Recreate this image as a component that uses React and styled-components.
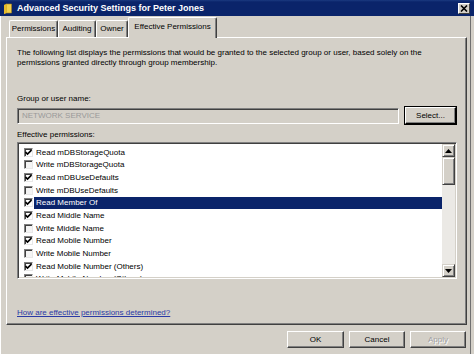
import React from "react";
import styled, { createGlobalStyle, css } from "styled-components";

const GlobalStyle = createGlobalStyle`
  html, body { margin: 0; padding: 0; background: #d4d0c8; }
  body { font-family: "Liberation Sans", Arial, sans-serif; }
  * { box-sizing: border-box; }
`;

const FONT = `"Liberation Sans", Arial, sans-serif`;

const Window = styled.div`
  width: 474px;
  height: 354px;
  background: #d4d0c8;
  display: flex;
  flex-direction: column;
  overflow: hidden;
  font-family: ${FONT};
  font-size: 8px;
  color: #000;
  box-shadow: inset -3px 0 0 #d4d0c8, inset -4px 0 0 #707070, inset 1px 0 0 #ffffff;
`;

const TitleBar = styled.div`
  height: 16px;
  flex: 0 0 16px;
  background: linear-gradient(to bottom, #1b3a80 0px, #0a246a 2px, #0a246a 100%);
  display: flex;
  align-items: center;
  padding: 0 4px 0 3px;
  gap: 5px;
`;

const TitleText = styled.div`
  color: #fff;
  font-weight: bold;
  font-size: 9px;
  flex: 1;
  white-space: nowrap;
`;

const CloseButton = styled.div`
  width: 12px;
  height: 11px;
  background: #d4d0c8;
  border-top: 1px solid #fff;
  border-left: 1px solid #fff;
  border-right: 1px solid #404040;
  border-bottom: 1px solid #404040;
  display: flex;
  align-items: center;
  justify-content: center;
`;

const Client = styled.div`
  flex: 1;
  display: flex;
  flex-direction: column;
  padding: 1px 7px 0 6px;
`;

const TabStrip = styled.div`
  display: flex;
  align-items: flex-end;
  height: 20px;
  padding-left: 3px;
`;

const Tab = styled.div`
  width: ${(p) => p.$w}px;
  height: ${(p) => (p.$active ? 21 : 17)}px;
  border-top: 1px solid #ffffff;
  border-left: 1px solid #ffffff;
  border-right: 1px solid #404040;
  box-shadow: inset -1px 0 0 #808080;
  border-top-left-radius: 2px;
  border-top-right-radius: 2px;
  background: #d4d0c8;
  display: flex;
  align-items: center;
  justify-content: center;
  white-space: nowrap;
  font-size: 8px;
  padding-bottom: ${(p) => (p.$active ? 3 : 1)}px;
  ${(p) =>
    p.$active &&
    css`
      position: relative;
      z-index: 1;
      margin-bottom: -1px;
    `}
`;

const Panel = styled.div`
  height: 288px;
  border-top: 1px solid #ffffff;
  border-left: 1px solid #ffffff;
  border-right: 1px solid #404040;
  border-bottom: 1px solid #404040;
  box-shadow: inset -1px -1px 0 #808080;
  display: flex;
  flex-direction: column;
  padding: 10px 9px 0 10px;
`;

const Description = styled.div`
  line-height: 10px;
  font-size: 8px;
  width: 420px;
`;

const Label = styled.div`
  line-height: 10px;
  margin-top: ${(p) => p.$mt || 0}px;
`;

const FieldRow = styled.div`
  display: flex;
  align-items: center;
  margin-top: 3px;
  gap: 6px;
`;

const TextBox = styled.div`
  width: 382px;
  height: 16px;
  border-top: 1px solid #808080;
  border-left: 1px solid #808080;
  border-right: 1px solid #ffffff;
  border-bottom: 1px solid #ffffff;
  box-shadow: inset 1px 1px 0 #404040, inset -1px -1px 0 #d4d0c8;
  background: #d4d0c8;
  color: #9a9a9a;
  display: flex;
  align-items: center;
  padding-left: 4px;
  font-size: 8px;
`;

const Button = styled.div`
  width: ${(p) => p.$w}px;
  height: 17px;
  background: #d4d0c8;
  border-top: 1px solid #ffffff;
  border-left: 1px solid #ffffff;
  border-right: 1px solid #404040;
  border-bottom: 1px solid #404040;
  box-shadow: inset -1px -1px 0 #808080;
  display: flex;
  align-items: center;
  justify-content: center;
  font-size: 8px;
  color: ${(p) => (p.$disabled ? "#a0a0a0" : "#000")};
  text-shadow: ${(p) => (p.$disabled ? "1px 1px 0 #fff" : "none")};
  ${(p) =>
    p.$default &&
    css`
      outline: 1px solid #000;
      outline-offset: 0px;
      border-right-color: #000;
      border-bottom-color: #000;
    `}
`;

const ListBox = styled.div`
  margin-top: 2px;
  width: 440px;
  height: 137px;
  border-top: 1px solid #808080;
  border-left: 1px solid #808080;
  border-right: 1px solid #ffffff;
  border-bottom: 1px solid #ffffff;
  box-shadow: inset 1px 1px 0 #404040, inset -1px -1px 0 #d4d0c8;
  padding: 1px;
  display: flex;
  background: #fff;
`;

const Rows = styled.div`
  flex: 1;
  overflow: hidden;
  padding-top: 2px;
  background: #fff;
`;

const Row = styled.div`
  height: 12.67px;
  display: flex;
  align-items: center;
  padding-left: 5px;
`;

const CheckBox = styled.div`
  width: 9px;
  height: 9px;
  flex: 0 0 9px;
  border-top: 1px solid #808080;
  border-left: 1px solid #808080;
  border-right: 1px solid #e8e8e8;
  border-bottom: 1px solid #e8e8e8;
  box-shadow: inset 1px 1px 0 #404040;
  background: ${(p) => (p.$checked ? "#fff" : "#f4f4f4")};
  display: flex;
  align-items: center;
  justify-content: center;
  margin-right: 1px;
`;

const ItemLabel = styled.div`
  flex: 1;
  height: 12px;
  display: flex;
  align-items: center;
  padding-left: 2px;
  white-space: nowrap;
  background: ${(p) => (p.$selected ? "#0a246a" : "transparent")};
  color: ${(p) => (p.$selected ? "#fff" : "#000")};
`;

const ScrollBar = styled.div`
  width: 13px;
  flex: 0 0 13px;
  display: flex;
  flex-direction: column;
  background: #ebe9e5;
`;

const ScrollButton = styled.div`
  height: ${(p) => p.$h || 13}px;
  flex: 0 0 ${(p) => p.$h || 13}px;
  background: #d4d0c8;
  border-top: 1px solid #d4d0c8;
  border-left: 1px solid #d4d0c8;
  border-right: 1px solid #404040;
  border-bottom: 1px solid #404040;
  box-shadow: inset 1px 1px 0 #ffffff, inset -1px -1px 0 #808080;
  display: flex;
  align-items: center;
  justify-content: center;
`;

const Track = styled.div`
  flex: 1;
`;

const Link = styled.a`
  margin-top: 29px;
  color: #2a3aa6;
  text-decoration: underline;
  line-height: 10px;
  font-size: 8px;
  cursor: pointer;
  align-self: flex-start;
`;

const Footer = styled.div`
  display: flex;
  justify-content: flex-end;
  gap: 5px;
  margin-top: 6px;
  padding-right: 1px;
`;

const Check = () => (
  <svg width="7" height="7" viewBox="0 0 7 7">
    <path d="M0.5 3 L2.5 5 L6.5 1" stroke="#000" strokeWidth="1.7" fill="none" />
  </svg>
);

const Arrow = ({ up }) => (
  <svg width="7" height="4" viewBox="0 0 7 4">
    {up ? <path d="M0 4 L3.5 0 L7 4 Z" fill="#000" /> : <path d="M0 0 L3.5 4 L7 0 Z" fill="#000" />}
  </svg>
);

const FolderIcon = () => (
  <svg width="9" height="11" viewBox="0 0 9 11">
    <path d="M1 2 L4 0.5 L4 9.5 L1 11 Z" fill="#b08a1a" />
    <path d="M3.5 1 L8.5 1 L8.5 10 L3.5 10 Z" fill="#f2d04a" stroke="#a8841c" strokeWidth="0.6" />
    <path d="M1 2 L3.8 1 L3.8 10 L1 11 Z" fill="#e7bb2c" />
  </svg>
);

const CloseGlyph = () => (
  <svg width="8" height="7" viewBox="0 0 8 7">
    <path d="M1 0.5 L7 6.5 M7 0.5 L1 6.5" stroke="#000" strokeWidth="1.6" />
  </svg>
);

const items = [
  ["Read mDBStorageQuota", true],
  ["Write mDBStorageQuota", false],
  ["Read mDBUseDefaults", true],
  ["Write mDBUseDefaults", false],
  ["Read Member Of", true, true],
  ["Read Middle Name", true],
  ["Write Middle Name", false],
  ["Read Mobile Number", true],
  ["Write Mobile Number", false],
  ["Read Mobile Number (Others)", true],
  ["Write Mobile Number (Others)", false],
];

export default function App() {
  return (
    <>
      <GlobalStyle />
      <Window>
        <TitleBar>
          <FolderIcon />
          <TitleText>Advanced Security Settings for Peter Jones</TitleText>
          <CloseButton>
            <CloseGlyph />
          </CloseButton>
        </TitleBar>
        <Client>
          <TabStrip>
            <Tab $w={49}>Permissions</Tab>
            <Tab $w={38}>Auditing</Tab>
            <Tab $w={32}>Owner</Tab>
            <Tab $w={89} $active>
              Effective Permissions
            </Tab>
          </TabStrip>
          <Panel>
            <Description>
              The following list displays the permissions that would be granted to the selected group or user, based solely on the
              permissions granted directly through group membership.
            </Description>
            <Label $mt={26}>Group or user name:</Label>
            <FieldRow>
              <TextBox>NETWORK SERVICE</TextBox>
              <Button $w={51} $default>
                Select...
              </Button>
            </FieldRow>
            <Label $mt={6}>Effective permissions:</Label>
            <ListBox>
              <Rows>
                {items.map(([text, checked, selected]) => (
                  <Row key={text}>
                    <CheckBox $checked={checked}>{checked && <Check />}</CheckBox>
                    <ItemLabel $selected={selected}>{text}</ItemLabel>
                  </Row>
                ))}
              </Rows>
              <ScrollBar>
                <ScrollButton>
                  <Arrow up />
                </ScrollButton>
                <ScrollButton $h={28} />
                <Track />
                <ScrollButton>
                  <Arrow />
                </ScrollButton>
              </ScrollBar>
            </ListBox>
            <Link>How are effective permissions determined?</Link>
          </Panel>
          <Footer>
            <Button $w={57}>OK</Button>
            <Button $w={56}>Cancel</Button>
            <Button $w={56} $disabled>
              Apply
            </Button>
          </Footer>
        </Client>
      </Window>
    </>
  );
}
